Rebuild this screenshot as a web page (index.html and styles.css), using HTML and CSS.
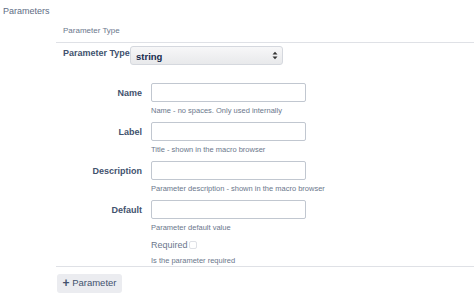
FILE: index.html
```html
<!DOCTYPE html>
<html lang="en">
<head>
    <meta charset="UTF-8" />
    <title>Parameters</title>
    <link rel="stylesheet" href="styles.css">
</head>
<body>

<div class="section-title">Parameters</div>

<div class="params">
    <div class="params-head">Parameter Type</div>

    <div class="type-row">
        <label class="type-label">Parameter Type</label>
        <div class="select-wrap">
            <select class="type-select">
                <option>string</option>
            </select>
            <svg class="select-arrow" width="6" height="9" viewBox="0 0 6 9">
                <path d="M0.5 3.5 L3 0.8 L5.5 3.5 Z M0.5 5.5 L3 8.2 L5.5 5.5 Z" fill="#333"/>
            </svg>
        </div>
    </div>

    <div class="field">
        <label class="field-label">Name</label>
        <div class="field-body">
            <input type="text" class="text" />
            <div class="help">Name - no spaces. Only used internally</div>
        </div>
    </div>
    <div class="field">
        <label class="field-label">Label</label>
        <div class="field-body">
            <input type="text" class="text" />
            <div class="help">Title - shown in the macro browser</div>
        </div>
    </div>
    <div class="field">
        <label class="field-label">Description</label>
        <div class="field-body">
            <input type="text" class="text" />
            <div class="help">Parameter description - shown in the macro browser</div>
        </div>
    </div>
    <div class="field">
        <label class="field-label">Default</label>
        <div class="field-body">
            <input type="text" class="text" />
            <div class="help">Parameter default value</div>
        </div>
    </div>
    <div class="field required">
        <div></div>
        <div class="field-body">
            <div class="check-row">Required<span class="check"></span></div>
            <div class="help">Is the parameter required</div>
        </div>
    </div>
</div>

<div class="actions">
    <button class="add-btn"><span class="plus">+</span> Parameter</button>
</div>

</body>
</html>
```

FILE: styles.css
```css
* { box-sizing: border-box; }
body {
    margin: 0;
    font-family: 'Liberation Sans', Arial, sans-serif;
    background: #fff;
    color: #172b4d;
}
.section-title {
    font-size: 9px;
    color: #5e6c84;
    padding: 6px 0 0 3px;
    height: 22px;
}
.params {
    margin-left: 56px;
    border-bottom: 1px solid #dfe1e6;
}
.params-head {
    font-size: 8px;
    color: #6b778c;
    padding: 4px 0 6px 7px;
    height: 21px;
    border-bottom: 1px solid #dfe1e6;
}
.type-row {
    display: flex;
    align-items: flex-start;
    padding: 3px 0 0 7px;
    height: 40px;
}
.type-label {
    font-size: 9px;
    font-weight: bold;
    color: #42526e;
    padding-top: 2px;
    width: 67px;
    flex: none;
    white-space: nowrap;
}
.select-wrap {
    position: relative;
    flex: none;
    width: 153px;
    height: 19px;
}
.type-select {
    appearance: none;
    -webkit-appearance: none;
    width: 100%;
    height: 19px;
    font-family: inherit;
    font-size: 9.5px;
    font-weight: bold;
    color: #172b4d;
    border: 1px solid #d5d8de;
    border-radius: 3px;
    background: linear-gradient(#f7f7f8, #e8e9eb);
    padding: 2px 0 0 5px;
}
.select-arrow {
    position: absolute;
    right: 5px;
    top: 5px;
    pointer-events: none;
}
.field {
    display: grid;
    grid-template-columns: 86px 155px;
    column-gap: 9px;
    height: 39px;
}
.field-label {
    text-align: right;
    font-size: 9px;
    font-weight: bold;
    color: #42526e;
    padding-top: 5px;
}
.text {
    display: block;
    width: 155px;
    height: 19px;
    margin: 0;
    border: 1px solid #c1c7d0;
    border-radius: 2px;
    background: #fff;
}
.help {
    font-size: 7.5px;
    color: #6b778c;
    margin-top: 4px;
    white-space: nowrap;
}
.required { height: 27px; }
.check-row {
    font-size: 9px;
    color: #6b778c;
    display: flex;
    align-items: center;
    height: 12px;
}
.check {
    width: 8px;
    height: 8px;
    border: 1px solid #dfe1e6;
    border-radius: 2px;
    margin-left: 1px;
}
.required .help { margin-top: 5px; }
.actions {
    padding: 5px 0 0 57px;
}
.add-btn {
    font-family: inherit;
    font-size: 9.5px;
    color: #42526e;
    background: #ebecf0;
    border: none;
    border-radius: 3px;
    height: 19px;
    width: 65px;
    padding: 0;
}
.plus {
    font-size: 12px;
    font-weight: bold;
    vertical-align: -1px;
}
```
